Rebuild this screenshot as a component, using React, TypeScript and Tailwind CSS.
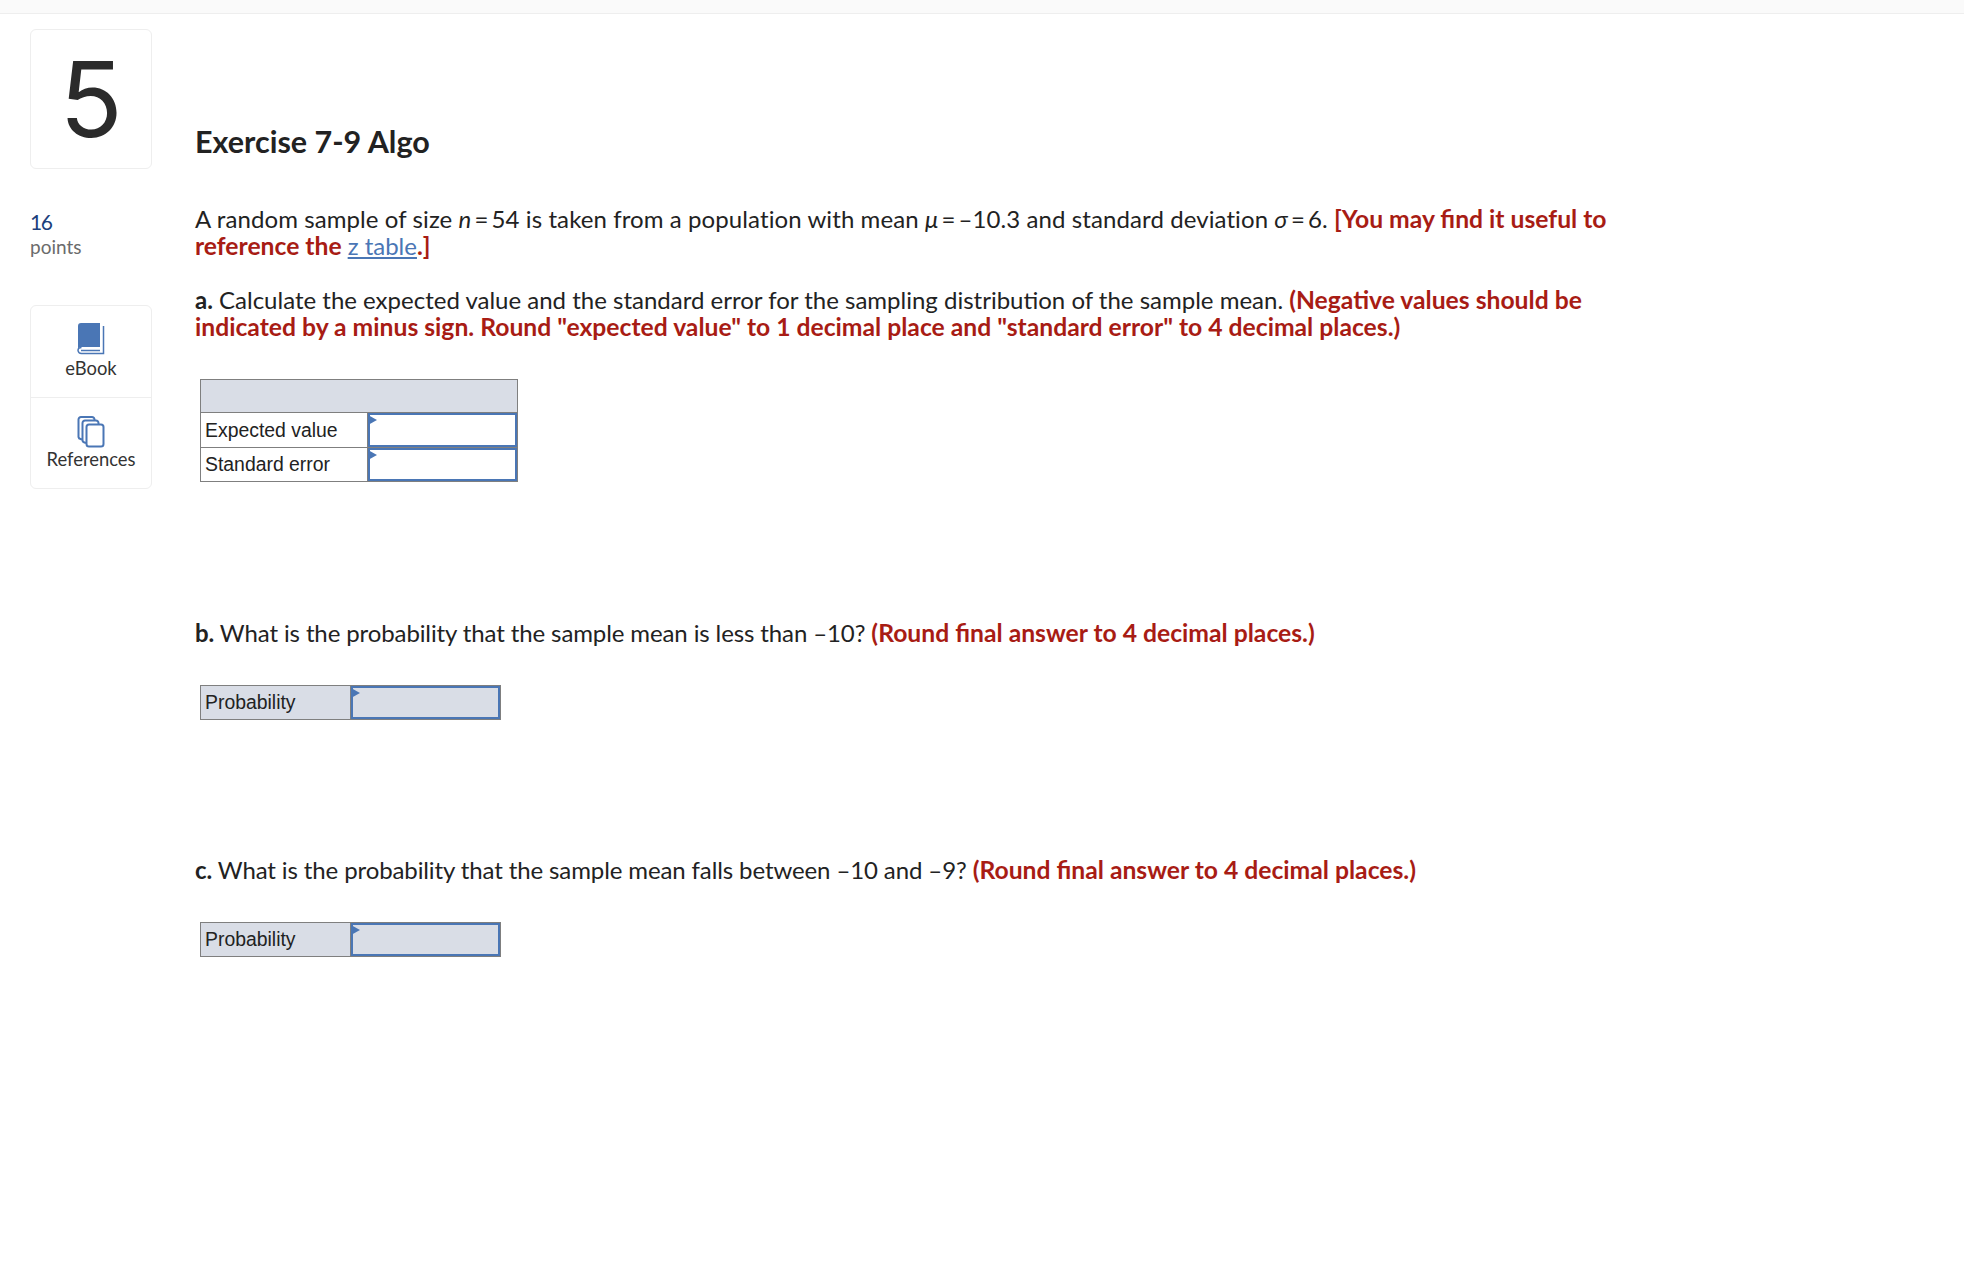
import React from "react";

const sans = "font-['Lato','Open_Sans',sans-serif]";
const red = "text-[24.7px] font-bold tracking-normal text-[#a81c14]";

function Cell({ shaded }: { shaded?: boolean }) {
  return (
    <div className={`relative h-full border-2 border-[#4a76b5] ${shaded ? "bg-[#d9dde6]" : "bg-white"}`}>
      <span className="absolute left-[-2px] top-0 h-0 w-0 border-y-[5px] border-l-[9px] border-y-transparent border-l-[#4a76b5]" />
    </div>
  );
}

function ProbabilityTable({ top }: { top: string }) {
  return (
    <div className={`${top} ml-[5px] flex h-[35px] w-[301px] border border-[#7f7f7f] bg-[#d9dde6] font-['Liberation_Sans',sans-serif] text-[19.4px] text-[#222]`}>
      <div className="flex w-[150px] items-center border-r border-[#7f7f7f] pl-[4px]">Probability</div>
      <div className="flex-1">
        <Cell shaded />
      </div>
    </div>
  );
}

function BookIcon() {
  return (
    <svg width="28" height="32" viewBox="0 0 28 32" fill="none">
      <path d="M1 26V3a3 3 0 0 1 3-3h19v24H4a3 3 0 0 0-3 2z" fill="#4a76b5" />
      <path d="M26.500 3v27.500H4.500A3.500 3.500 0 0 1 1 27.500c0-1.800 1.500-3 3.500-3" stroke="#4a76b5" strokeWidth="1.500" />
      <path d="M4 27.500h19" stroke="#4a76b5" strokeWidth="1.500" />
    </svg>
  );
}

function ReferencesIcon() {
  return (
    <svg width="28" height="32" viewBox="0 0 28 32" fill="none" stroke="#4a76b5" strokeWidth="2">
      <path d="M5 23.500l-1.500-.5A2.500 2.500 0 0 1 1.500 21V3.500A2.500 2.500 0 0 1 4 1h11a2.500 2.500 0 0 1 2.500 2.500V5" />
      <path d="M9 27l-1.500-.5A2.500 2.500 0 0 1 5.500 24V7A2.500 2.500 0 0 1 8 4.500h11a2.500 2.500 0 0 1 2.500 2.500V9" />
      <rect x="9.500" y="8.500" width="17" height="22" rx="2.500" fill="#fff" />
    </svg>
  );
}

export default function App() {
  return (
    <div className={`min-h-[1268px] bg-white text-[#222] ${sans}`}>
      <div className="h-[14px] border-b border-[#eeeeee] bg-[#fafafa]" />

      <div className="flex pt-[15px]">
        {/* Left rail */}
        <div className="ml-[30px] w-[122px] shrink-0">
          <div className="flex h-[140px] items-center justify-center rounded-[6px] border border-[#eeeeee] font-['Inter',sans-serif] text-[104px] leading-none text-[#2b2b2b]">
            5
          </div>
          <div className="mt-[39px] text-[21px] leading-[27px] tracking-[-1.5px] text-[#1c3f7c]">16</div>
          <div className="text-[19px] leading-[24px] text-[#6b6b6b]">points</div>
          <div className="mt-[46px] rounded-[6px] border border-[#eeeeee] text-[#333]">
            <div className="flex h-[92px] flex-col items-center border-b border-[#eeeeee] pt-[17px] text-[18.4px] leading-[22px]">
              <BookIcon />
              <span className="mt-[2px]">eBook</span>
            </div>
            <div className="flex h-[90px] flex-col items-center pt-[18px] text-[18.4px] leading-[22px]">
              <ReferencesIcon />
              <span>References</span>
            </div>
          </div>
        </div>

        {/* Question */}
        <div className="ml-[43px] w-[1600px] text-[24px] leading-[27px]">
          <h1 className="mt-[95px] text-[30.5px] font-bold leading-[34px]">Exercise 7-9 Algo</h1>
          <p className="mt-[47px] tracking-[0.09px]">
            A random sample of size <i>n</i>{"\u2009=\u2009"}54 is taken from a population with mean <i>μ</i>{"\u2009=\u2009"}–10.3 and standard deviation <i>σ</i>{"\u2009=\u2009"}6.{" "}
            <span className={red}>
              [You may find it useful to
              <br />
              reference the <span className="text-[24px] font-normal text-[#4a76b5] underline">z table</span>.]
            </span>
          </p>
          <p className="mt-[27px]">
            <b>a.</b> Calculate the expected value and the standard error for the sampling distribution of the sample mean.{" "}
            <span className={red}>
              (Negative values should be
              <br />
              indicated by a minus sign. Round "expected value" to 1 decimal place and "standard error" to 4 decimal places.)
            </span>
          </p>

          <div className="mt-[39px] ml-[5px] w-[318px] border border-[#7f7f7f] font-['Liberation_Sans',sans-serif] text-[19.4px] text-[#222]">
            <div className="h-[33px] border-b border-[#7f7f7f] bg-[#d9dde6]" />
            <div className="flex h-[35px] border-b border-[#7f7f7f]">
              <div className="flex w-[167px] items-center border-r border-[#7f7f7f] pl-[4px]">Expected value</div>
              <div className="flex-1">
                <Cell />
              </div>
            </div>
            <div className="flex h-[33px]">
              <div className="flex w-[167px] items-center border-r border-[#7f7f7f] pl-[4px]">Standard error</div>
              <div className="flex-1">
                <Cell />
              </div>
            </div>
          </div>

          <p className="mt-[137px] tracking-[-0.11px]">
            <b>b.</b> What is the probability that the sample mean is less than –10?{" "}
            <span className={red}>(Round final answer to 4 decimal places.)</span>
          </p>
          <ProbabilityTable top="mt-[39px]" />

          <p className="mt-[136px] tracking-[-0.11px]">
            <b>c.</b> What is the probability that the sample mean falls between –10 and –9?{" "}
            <span className={red}>(Round final answer to 4 decimal places.)</span>
          </p>
          <ProbabilityTable top="mt-[39px]" />
        </div>
      </div>
    </div>
  );
}
